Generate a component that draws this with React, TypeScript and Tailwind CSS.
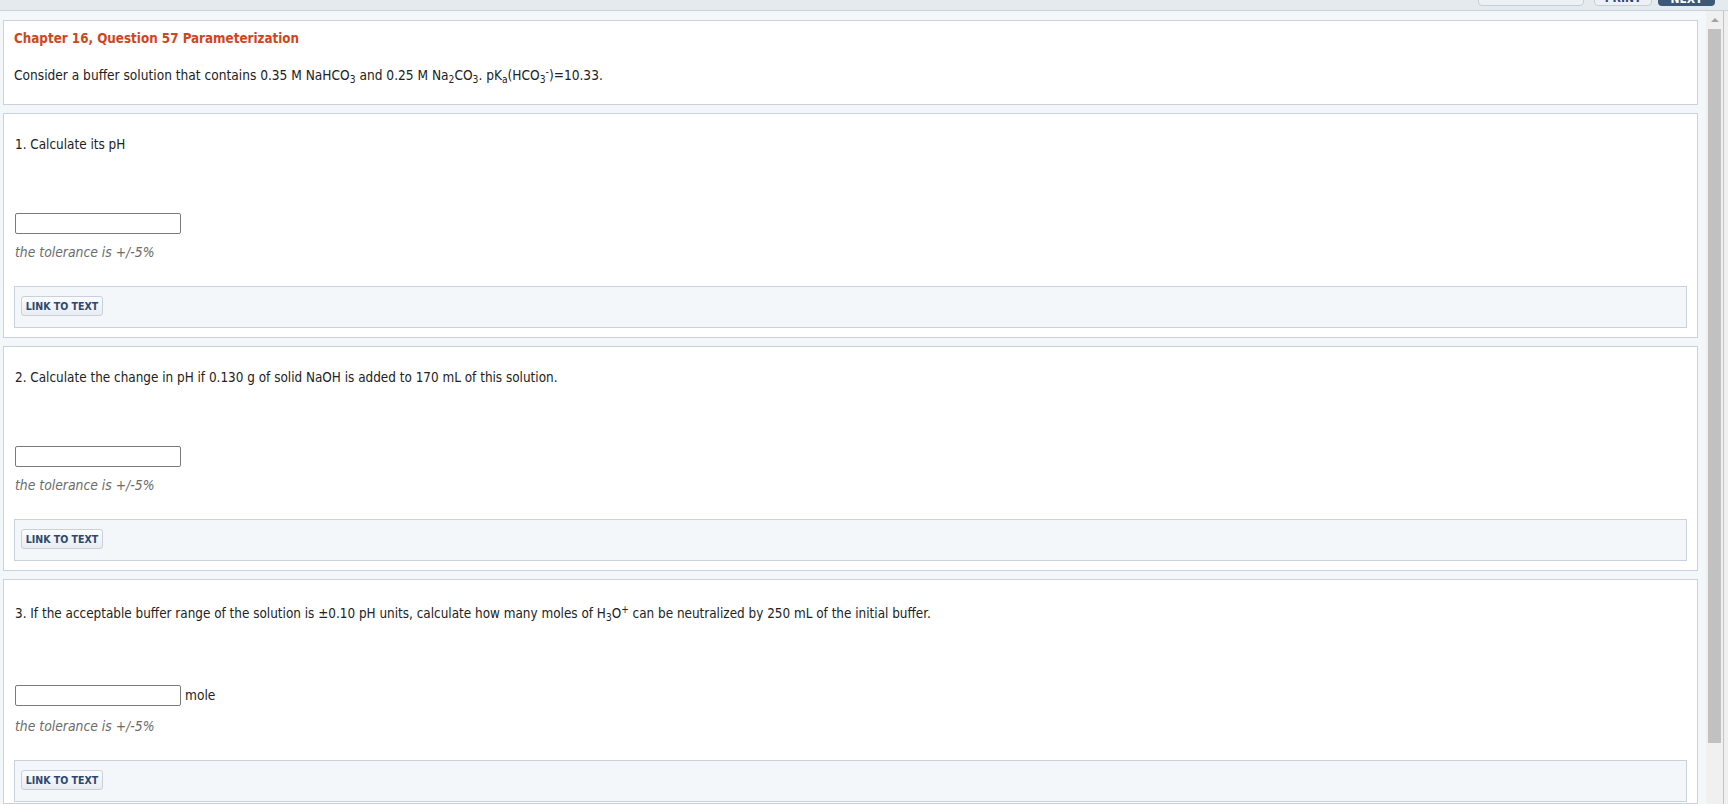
import React from 'react'

const font = "font-['DejaVu_Sans_Condensed','DejaVu_Sans',Tahoma,sans-serif]"

function LinkBox() {
  return (
    <div className="mx-[10px] h-[42px] border border-[#c9d2de] bg-[#f4f7fa] p-[6px]">
      <button className="h-[20px] w-[82px] rounded-[3px] border border-[#c8d0da] bg-gradient-to-b from-[#fbfcfd] to-[#e9edf2] text-[10.5px] font-bold leading-none text-[#2c4872]">
        LINK TO TEXT
      </button>
    </div>
  )
}

function Question({
  children,
  unit,
  lineClass = 'leading-[18px]',
  tolClass = 'mt-[9px]',
}: {
  children: React.ReactNode
  unit?: string
  lineClass?: string
  tolClass?: string
}) {
  return (
    <section className="h-[225px] shrink-0 border border-[#c9d2de] bg-white pt-[22px]">
      <p className={`px-[11px] text-[13.4px] text-[#222] ${lineClass}`}>{children}</p>
      <div className="mt-[59px] flex items-center gap-[4px] px-[11px]">
        <input className="h-[21px] w-[166px] rounded-[2px] border border-[#7a7a7a] bg-white px-1 text-[13px] outline-none" />
        {unit && <span className="text-[13.6px] text-[#222]">{unit}</span>}
      </div>
      <p className={`${tolClass} px-[11px] text-[13.8px] leading-[18px] text-[#6b6b6b] italic`}>
        the tolerance is +/-5%
      </p>
      <div className="mt-[25px]">
        <LinkBox />
      </div>
    </section>
  )
}

export default function App() {
  return (
    <div className={`h-[804px] w-[1728px] overflow-hidden bg-[#f4f7fa] ${font}`}>
      {/* top toolbar, mostly scrolled away */}
      <div className="flex h-[11px] items-end justify-end overflow-hidden border-b border-[#c9d2dc] bg-[#e5eaef] pr-[13px]">
        <div className="mb-[4px] flex items-end gap-[10px]">
          <div className="h-[30px] w-[106px] rounded-[4px] border border-[#c6cfd9] bg-[#eef1f4]" />
          <div className="flex gap-[6px]">
            <div className="flex h-[30px] w-[58px] items-end justify-center rounded-[4px] border border-[#c6cfd9] bg-[#eef1f4] text-[12px] font-bold leading-[14px] text-[#2c4872]">
              PRINT
            </div>
            <div className="flex h-[30px] w-[57px] items-end justify-center rounded-[4px] bg-[#3c5a78] text-[12px] font-bold leading-[14px] text-white">
              NEXT
            </div>
          </div>
        </div>
      </div>

      <div className="flex h-[793px]">
        <main className="flex flex-1 flex-col gap-[8px] pl-[3px] pr-[8px] pt-[9px]">
          <section className="h-[85px] shrink-0 border border-[#c9d2de] bg-white px-[10px] pt-[9px]">
            <h1 className="text-[13.3px] font-bold leading-[18px] text-[#d0461c]">
              Chapter 16, Question 57 Parameterization
            </h1>
            <p className="mt-[18px] text-[13.6px] leading-[18px] text-[#222]">
              Consider a buffer solution that contains 0.35 M NaHCO<sub>3</sub> and 0.25 M Na
              <sub>2</sub>CO<sub>3</sub>. pK<sub>a</sub>(HCO<sub>3</sub>
              <sup>-</sup>)=10.33.
            </p>
          </section>

          <Question>1. Calculate its pH</Question>
          <Question>
            2. Calculate the change in pH if 0.130 g of solid NaOH is added to 170 mL of this solution.
          </Question>
          <Question unit="mole" lineClass="leading-[24px]" tolClass="mt-[11px]">
            3. If the acceptable buffer range of the solution is ±0.10 pH units, calculate how many moles of H
            <sub>3</sub>O<sup>+</sup> can be neutralized by 250 mL of the initial buffer.
          </Question>
        </main>

        {/* scrollbar */}
        <div className="flex w-[22px] shrink-0">
          <div className="flex w-[17px] flex-col items-center bg-[#f0f0f0]">
            <div className="flex h-[18px] items-center justify-center">
              <div className="h-0 w-0 border-x-[4px] border-b-[4px] border-x-transparent border-b-[#a3a3a3]" />
            </div>
            <div className="h-[714px] w-[13px] bg-[#c1c1c1]" />
          </div>
          <div className="w-[1px] bg-[#c4c4c4]" />
          <div className="flex-1 bg-[#f0f0f0]" />
        </div>
      </div>
    </div>
  )
}
